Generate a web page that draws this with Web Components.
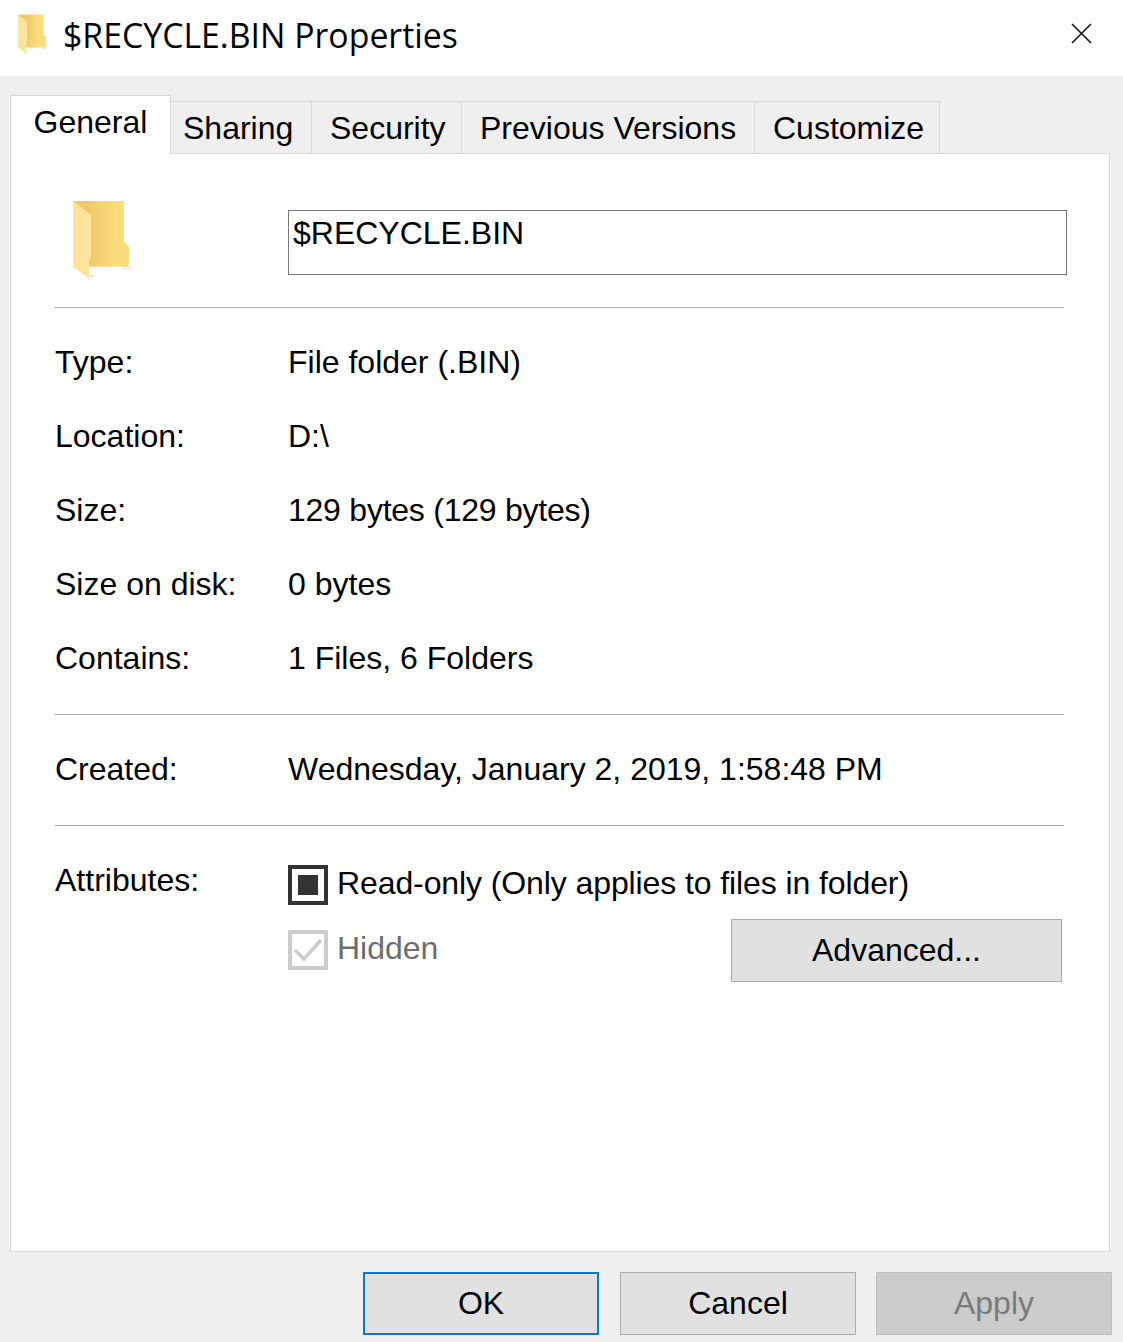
<!DOCTYPE html>
<html>
<head>
<meta charset="utf-8">
<title>$RECYCLE.BIN Properties</title>
<style>
    html, body { margin: 0; padding: 0; background: #efefef; }
    body { font-family: "Liberation Sans", Arial, sans-serif; font-size: 32px; color: #000; }
</style>
</head>
<body>
<props-dialog></props-dialog>

<script>
const folderSvg = `
<svg viewBox="0 0 62 82" width="100%" height="100%" xmlns="http://www.w3.org/2000/svg">
    <defs>
        <linearGradient id="back" x1="0" x2="1" y1="0" y2="0">
            <stop offset="0.3" stop-color="#efca6c"/>
            <stop offset="0.75" stop-color="#fddc7c"/>
            <stop offset="1" stop-color="#fddc7c"/>
        </linearGradient>
    </defs>
    <path d="M50 67 H61 L56 70 H50 Z" fill="#ececec"/>
    <path d="M16 75 H24 L17 79 Z" fill="#ececec"/>
    <path d="M0 1 H51 V42 L56 46 V67 H16 V15 L0 4 Z" fill="url(#back)"/>
    <path d="M0 1 L18 15 V58 L16 60 V79 L0 67 Z" fill="#fee49a"/>
</svg>`;

class FolderIcon extends HTMLElement {
    constructor() {
        super();
        this.attachShadow({ mode: 'open' });
        this.shadowRoot.innerHTML = `
            <style>
                :host { display: block; width: var(--size, 62px); height: calc(var(--size, 62px) * 1.32); }
            </style>
            ${folderSvg}
        `;
    }
}
customElements.define('folder-icon', FolderIcon);

class TitleBar extends HTMLElement {
    constructor() {
        super();
        this.attachShadow({ mode: 'open' });
        this.shadowRoot.innerHTML = `
            <style>
                :host {
                    display: flex;
                    align-items: center;
                    height: 76px;
                    background: #fff;
                    padding-left: 18px;
                    box-sizing: border-box;
                }
                folder-icon { --size: 31px; margin-right: 14px; margin-top: -8px; }
                .title {
                    font-family: "Open Sans", "Noto Sans", sans-serif;
                    font-size: 33.8px;
                    flex: 1;
                    color: #000;
                    margin-top: -7px;
                }
                svg { margin-right: 31px; margin-top: -10px; }
            </style>
            <folder-icon></folder-icon>
            <span class="title"><slot></slot></span>
            <svg width="21" height="21" viewBox="0 0 21 21">
                <path d="M1 1 L20 20 M20 1 L1 20" stroke="#1a1a1a" stroke-width="1.7" fill="none"/>
            </svg>
        `;
    }
}
customElements.define('title-bar', TitleBar);

class TabStrip extends HTMLElement {
    constructor() {
        super();
        this.attachShadow({ mode: 'open' });
        this.shadowRoot.innerHTML = `
            <style>
                :host {
                    display: flex;
                    align-items: flex-end;
                    height: 59px;
                    margin-top: 19px;
                    padding-left: 10px;
                    position: relative;
                    z-index: 1;
                }
            </style>
            <slot></slot>
        `;
    }
}
customElements.define('tab-strip', TabStrip);

class TabItem extends HTMLElement {
    constructor() {
        super();
        this.attachShadow({ mode: 'open' });
        this.shadowRoot.innerHTML = `
            <style>
                :host {
                    display: flex;
                    box-sizing: border-box;
                    width: var(--w);
                    height: 52px;
                    margin-bottom: 1px;
                    padding: 7px 0 0 var(--pl, 18px);
                    background: #efefef;
                    border: 1px solid #d9d9d9;
                    border-left: none;
                    border-bottom: none;
                    line-height: 38px;
                    white-space: nowrap;
                }
                :host([active]) {
                    height: 59px;
                    margin-bottom: 0;
                    padding: 7px 0 0;
                    justify-content: center;
                    background: #fff;
                    border-left: 1px solid #d9d9d9;
                }
            </style>
            <slot></slot>
        `;
    }
}
customElements.define('tab-item', TabItem);

class PropRow extends HTMLElement {
    constructor() {
        super();
        this.attachShadow({ mode: 'open' });
        this.shadowRoot.innerHTML = `
            <style>
                :host {
                    display: grid;
                    grid-template-columns: 233px 1fr;
                    box-sizing: border-box;
                    height: 74px;
                    padding-bottom: 2px;
                    align-items: center;
                    line-height: 38px;
                }
            </style>
            <div><slot name="label"></slot></div>
            <div><slot></slot></div>
        `;
    }
}
customElements.define('prop-row', PropRow);

class SepLine extends HTMLElement {
    constructor() {
        super();
        this.attachShadow({ mode: 'open' });
        this.shadowRoot.innerHTML = `
            <style>
                :host { display: block; height: 1px; background: #a8a8a8; margin-right: 45px; }
            </style>
        `;
    }
}
customElements.define('sep-line', SepLine);

class CheckBox extends HTMLElement {
    constructor() {
        super();
        this.attachShadow({ mode: 'open' });
        const disabled = this.hasAttribute('disabled');
        this.shadowRoot.innerHTML = `
            <style>
                :host {
                    display: flex;
                    align-items: center;
                    gap: 9px;
                    line-height: 38px;
                    color: ${disabled ? '#6d6d6d' : '#000'};
                }
                .box {
                    box-sizing: border-box;
                    width: 40px;
                    height: 40px;
                    border: 4px solid ${disabled ? '#cccccc' : '#333333'};
                    background: #fff;
                    display: flex;
                    align-items: center;
                    justify-content: center;
                }
                .fill { width: 20px; height: 20px; background: #333333; }
                span { margin-top: -4px; }
            </style>
            <div class="box">
                ${disabled
                    ? `<svg width="32" height="32" viewBox="0 0 32 32"><path d="M3 16 L12 25 L29 6" stroke="#cccccc" stroke-width="3.4" fill="none"/></svg>`
                    : `<div class="fill"></div>`}
            </div>
            <span><slot></slot></span>
        `;
    }
}
customElements.define('check-box', CheckBox);

class PushButton extends HTMLElement {
    constructor() {
        super();
        this.attachShadow({ mode: 'open' });
        this.shadowRoot.innerHTML = `
            <style>
                :host {
                    display: flex;
                    box-sizing: border-box;
                    align-items: center;
                    justify-content: center;
                    width: var(--w, 236px);
                    height: var(--h, 63px);
                    background: #e1e1e1;
                    border: 1px solid #adadad;
                    color: #000;
                    flex: none;
                }
                :host([primary]) { border: 2px solid #0078d7; }
                :host([disabled]) { background: #cccccc; border-color: #bfbfbf; color: #7a7a7a; }
            </style>
            <slot></slot>
        `;
    }
}
customElements.define('push-button', PushButton);

class GeneralPanel extends HTMLElement {
    constructor() {
        super();
        this.attachShadow({ mode: 'open' });
        this.shadowRoot.innerHTML = `
            <style>
                :host {
                    display: block;
                    box-sizing: border-box;
                    margin: 0 13px 0 10px;
                    height: 1099px;
                    background: #fff;
                    border: 1px solid #d9d9d9;
                    padding: 46px 0 0 44px;
                }
                .name { display: grid; grid-template-columns: 233px 1fr; height: 107px; }
                folder-icon { --size: 62px; margin-left: 18px; }
                .input {
                    box-sizing: border-box;
                    width: 779px;
                    height: 65px;
                    margin-top: 10px;
                    border: 1px solid #7a7a7a;
                    padding: 3px 4px 0;
                    line-height: 38px;
                }
                .props { padding: 18px 0 18px; }
                .created { padding: 18px 0 18px; }
                .attrs {
                    display: grid;
                    grid-template-columns: 233px 1fr;
                    padding-top: 39px;
                    line-height: 38px;
                }
                .label { margin-top: -4px; }
                .hidden-row {
                    display: flex;
                    align-items: center;
                    justify-content: space-between;
                    margin-top: 14px;
                    width: 774px;
                }
                .hidden-row check-box { margin-top: -2px; }
                .tight { letter-spacing: -0.24px; }
                .read-only { letter-spacing: -0.1px; }
            </style>
            <div class="name">
                <folder-icon></folder-icon>
                <div class="input">$RECYCLE.BIN</div>
            </div>
            <sep-line></sep-line>
            <div class="props">
                <prop-row><span slot="label">Type:</span>File folder (.BIN)</prop-row>
                <prop-row><span slot="label">Location:</span>D:\\</prop-row>
                <prop-row><span slot="label">Size:</span><span class="tight">129 bytes (129 bytes)</span></prop-row>
                <prop-row><span slot="label">Size on disk:</span>0 bytes</prop-row>
                <prop-row><span slot="label">Contains:</span>1 Files, 6 Folders</prop-row>
            </div>
            <sep-line></sep-line>
            <div class="created">
                <prop-row><span slot="label">Created:</span>Wednesday, January 2, 2019, 1:58:48 PM</prop-row>
            </div>
            <sep-line></sep-line>
            <div class="attrs">
                <div class="label">Attributes:</div>
                <div>
                    <check-box class="read-only">Read-only (Only applies to files in folder)</check-box>
                    <div class="hidden-row">
                        <check-box disabled>Hidden</check-box>
                        <push-button style="--w:331px;padding-bottom:2px">Advanced...</push-button>
                    </div>
                </div>
            </div>
        `;
    }
}
customElements.define('general-panel', GeneralPanel);

class PropsDialog extends HTMLElement {
    constructor() {
        super();
        this.attachShadow({ mode: 'open' });
        this.shadowRoot.innerHTML = `
            <style>
                :host { display: block; height: 1342px; overflow: hidden; }
                .footer {
                    display: flex;
                    justify-content: flex-end;
                    gap: 21px;
                    padding: 20px 11px 0 0;
                }
                .footer push-button:last-child { margin-left: -1px; }
            </style>
            <title-bar>$RECYCLE.BIN Properties</title-bar>
            <tab-strip>
                <tab-item active style="--w:161px">General</tab-item>
                <tab-item style="--w:141px;--pl:12px">Sharing</tab-item>
                <tab-item style="--w:150px">Security</tab-item>
                <tab-item style="--w:293px">Previous Versions</tab-item>
                <tab-item style="--w:185px">Customize</tab-item>
            </tab-strip>
            <general-panel style="margin-top:-1px"></general-panel>
            <div class="footer">
                <push-button primary>OK</push-button>
                <push-button>Cancel</push-button>
                <push-button disabled>Apply</push-button>
            </div>
        `;
    }
}
customElements.define('props-dialog', PropsDialog);
</script>
</body>
</html>
